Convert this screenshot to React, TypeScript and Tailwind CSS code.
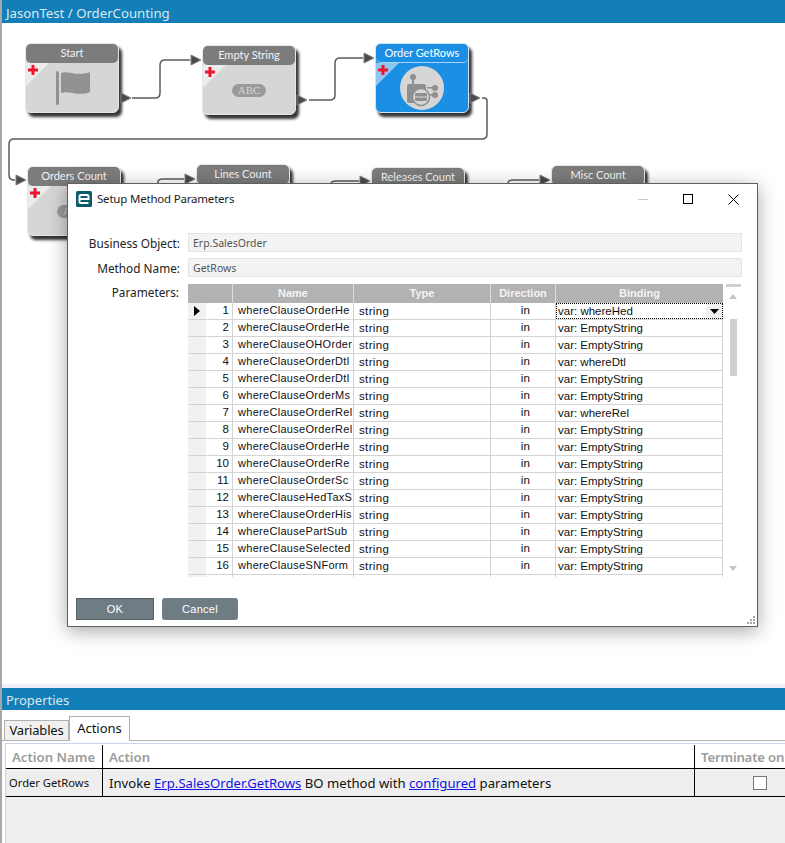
import React from "react";

const SEGOE = "font-['Noto_Sans',sans-serif]";
const ARIAL = "font-['Liberation_Sans',Arial,sans-serif]";

function Triangle({ x, y }: { x: number; y: number }) {
  return (
    <path
      d={`M${x} ${y - 5}L${x + 10} ${y}L${x} ${y + 5}Z`}
      fill="#4a4a4a"
      stroke="#808080"
      strokeWidth="1"
    />
  );
}

function Connectors() {
  const lines = [
    "M132 75H155Q160 75 160 70V42Q160 37 165 37H190",
    "M309 77H330Q335 77 335 72V40Q335 35 340 35H363",
    "M482 75H484Q487 75 487 78V111Q487 116 482 116H14Q9 116 9 121V152Q9 157 14 157H15",
    "M158 162V159Q158 156 163 156H184",
    "M331 162V161Q331 158 336 158H359",
    "M508 162V160Q508 157 513 157H539",
  ];
  return (
    <svg className="absolute left-0 top-0" width="785" height="200" fill="none">
      {lines.map((d) => (
        <path key={d} d={d} stroke="#5c5c5c" strokeWidth="1.5" />
      ))}
      <Triangle x={121} y={75} />
      <Triangle x={191} y={37} />
      <Triangle x={297} y={77} />
      <Triangle x={364} y={35} />
      <Triangle x={470} y={75} />
      <Triangle x={16} y={157} />
      <Triangle x={185} y={156} />
      <Triangle x={360} y={158} />
      <Triangle x={540} y={157} />
    </svg>
  );
}

function Plus() {
  return (
    <svg className="absolute left-[2px] top-[2px]" width="10" height="10" viewBox="0 0 10 10">
      <path d="M3.5 0H6.5V3.5H10V6.5H6.5V10H3.5V6.5H0V3.5H3.5Z" fill="#f0142d" />
    </svg>
  );
}

function FlagIcon() {
  return (
    <svg className="absolute left-[30px] top-[8px]" width="36" height="36" viewBox="0 0 36 36">
      <rect x="0" y="0" width="3" height="34" rx="1.5" fill="#929292" />
      <path d="M5 2C12 -1 20 6 34 1V21C22 26 13 19 5 22Z" fill="#929292" />
    </svg>
  );
}

function MethodIcon() {
  return (
    <svg className="absolute left-[24px] top-[3px]" width="44" height="44" viewBox="0 0 44 44">
      <circle cx="22" cy="22" r="22" fill="#d6d6d6" />
      <circle cx="13" cy="11" r="3" fill="#8f8f8f" />
      <rect x="12" y="13" width="2" height="6" fill="#8f8f8f" />
      <rect x="7" y="18" width="19" height="19" rx="2" fill="#8f8f8f" />
      <rect x="27" y="21" width="8" height="1.5" fill="#8f8f8f" />
      <rect x="27" y="28" width="8" height="1.5" fill="#8f8f8f" />
      <circle cx="35" cy="22" r="3" fill="#8f8f8f" />
      <circle cx="35" cy="29" r="3" fill="#8f8f8f" />
      <circle cx="21" cy="31" r="8.5" fill="#d6d6d6" stroke="#8f8f8f" strokeWidth="1.5" />
      <rect x="15" y="27" width="12" height="8" rx="1" fill="#8f8f8f" />
      <rect x="15" y="30.5" width="12" height="1" fill="#d6d6d6" />
    </svg>
  );
}

type NodeProps = {
  x: number;
  y: number;
  title: string;
  active?: boolean;
  icon?: "flag" | "abc" | "method";
};

function FlowNode({ x, y, title, active, icon }: NodeProps) {
  return (
    <div
      className={`absolute h-[70px] w-[94px] rounded-[6px] border shadow-[3px_4px_3px_rgba(0,0,0,0.8)] ${
        active ? "border-[#cfe3f2] bg-[#1a8fe4]" : "border-[#e6e6e6] bg-[#d6d6d6]"
      }`}
      style={{ left: x, top: y }}
    >
      <div
        className={`h-[19px] rounded-[5px] text-center font-['Lato',sans-serif] text-[11px] leading-[18px] ${
          active ? "border-b border-[#a9d3f2] bg-[#1a8fe4] text-white" : "bg-[#7c7c7c] text-[#f4f4f4]"
        }`}
      >
        {title}
      </div>
      <div className="relative">
        <svg className="absolute left-0 top-0" width="23" height="23">
          <path d="M0 0H23L0 23Z" fill={active ? "#8cc6f1" : "#ececec"} />
        </svg>
        {icon === "flag" && <FlagIcon />}
        {icon === "abc" && (
          <div className="absolute left-[29px] top-[19px] h-[13px] w-[34px] rounded-full bg-[#9a9a9a] text-center font-['Liberation_Serif',serif] text-[11px] leading-[13px] text-[#d6d6d6]">
            ABC
          </div>
        )}
        {icon === "method" && <MethodIcon />}
        <Plus />
      </div>
    </div>
  );
}

const names = [
  "whereClauseOrderHe",
  "whereClauseOrderHe",
  "whereClauseOHOrder",
  "whereClauseOrderDtl",
  "whereClauseOrderDtl",
  "whereClauseOrderMs",
  "whereClauseOrderRel",
  "whereClauseOrderRel",
  "whereClauseOrderHe",
  "whereClauseOrderRe",
  "whereClauseOrderSc",
  "whereClauseHedTaxS",
  "whereClauseOrderHis",
  "whereClausePartSub",
  "whereClauseSelected",
  "whereClauseSNForm",
];
const bindings: Record<number, string> = { 0: "whereHed", 3: "whereDtl", 6: "whereRel" };

function GridRow({ n, name, binding }: { n?: number; name?: string; binding?: string }) {
  const first = n === 1;
  return (
    <div className={`flex h-[17px] shrink-0 border-b-[1.5px] border-[#d4d4d4] text-[11px] leading-[15px] text-[#111] ${ARIAL}`}>
      <div className="flex w-[18px] shrink-0 items-center justify-center bg-[#f1f1f1]">
        {first && (
          <svg width="6" height="10" viewBox="0 0 6 10">
            <path d="M0 0L6 5L0 10Z" fill="#000" />
          </svg>
        )}
      </div>
      <div className="w-[27px] shrink-0 border-r-[1.5px] border-[#d4d4d4] pr-[3px] text-right text-[11.5px]">{n}</div>
      <div className="w-[121px] shrink-0 overflow-hidden whitespace-nowrap border-r-[1.5px] border-[#d4d4d4] pl-[5px] tracking-[0.3px]">
        {name}
      </div>
      <div className="w-[137px] shrink-0 border-r-[1.5px] border-[#d4d4d4] pl-[5px] pt-[1px] text-[11.5px] tracking-[0.35px]">{n ? "string" : ""}</div>
      <div className="w-[65px] shrink-0 border-r-[1.5px] border-[#d4d4d4] pl-[5px] text-center text-[11.5px] tracking-[0.35px]">{n ? "in" : ""}</div>
      {first ? (
        <div className="flex w-[167px] shrink-0 items-center justify-between border border-dotted border-black pl-px text-[11.5px]">
          <span className="pt-[1px]">var: {binding}</span>
          <div className="flex h-full w-[16px] items-center justify-center bg-[#f0f0f0]">
            <svg width="9" height="5" viewBox="0 0 9 5">
              <path d="M0 0H9L4.5 5Z" fill="#000" />
            </svg>
          </div>
        </div>
      ) : (
        <div className="w-[167px] shrink-0 border-r-[1.5px] border-[#d4d4d4] pl-[2px] pt-[1px] text-[11.5px]">{n ? `var: ${binding}` : ""}</div>
      )}
    </div>
  );
}

function Dialog() {
  return (
    <div className={`absolute left-[67px] top-[160px] h-[444px] w-[691px] border border-[#5f5f5f] bg-white shadow-[0_4px_18px_rgba(0,0,0,0.35)] ${SEGOE}`}>
      <div className="flex h-[30px] items-center pl-[8px] pr-[18px]">
        <svg width="16" height="16" viewBox="0 0 16 16">
          <rect width="16" height="16" rx="1.5" fill="#0c5b6d" />
          <path d="M3.5 8H12.5V5.5Q12.5 4 11 4H5Q3.5 4 3.5 5.5V10.5Q3.5 12 5 12H12.5" fill="none" stroke="#fff" strokeWidth="2" />
        </svg>
        <span className="ml-[5px] text-[11.5px] tracking-[-0.2px] text-[#222]">Setup Method Parameters</span>
        <div className="ml-auto flex items-center gap-[35px]">
          <div className="h-px w-[10px] bg-[#c8c8c8]" />
          <div className="h-[10px] w-[10px] border border-black" />
          <svg width="11" height="11" viewBox="0 0 11 11">
            <path d="M.5 .5L10.5 10.5M10.5 .5L.5 10.5" stroke="#000" strokeWidth="1" />
          </svg>
        </div>
      </div>
      <div className="mt-[19px] flex flex-col gap-[6px] pl-[120px] pr-[15px]">
        <div className="relative h-[19px] border border-[#e4e4e4] bg-[#f3f3f3] pl-[4px] text-[10.5px] leading-[18px] text-[#555]">
          <span className="absolute right-full mr-[9px] whitespace-nowrap text-[11.8px] text-[#222]">Business Object:</span>
          Erp.SalesOrder
        </div>
        <div className="relative h-[19px] border border-[#e4e4e4] bg-[#f3f3f3] pl-[4px] text-[10.5px] leading-[18px] text-[#555]">
          <span className="absolute right-full mr-[9px] whitespace-nowrap text-[11.8px] text-[#222]">Method Name:</span>
          GetRows
        </div>
        <div className="relative mt-[1px] flex h-[293px]">
          <span className="absolute right-full mr-[9px] whitespace-nowrap text-[11.8px] leading-[17px] text-[#222]">Parameters:</span>
          <div className="flex h-[293px] w-[535px] flex-col overflow-hidden">
            <div className={`flex h-[19px] shrink-0 bg-[#b2b2b2] text-center text-[11px] font-bold leading-[19px] text-[#f4f4f4] ${ARIAL}`}>
              <div className="w-[45px] shrink-0 border-r border-[#dcdcdc]" />
              <div className="w-[121px] shrink-0 border-r border-[#dcdcdc]">Name</div>
              <div className="w-[137px] shrink-0 border-r border-[#dcdcdc]">Type</div>
              <div className="w-[65px] shrink-0 border-r border-[#dcdcdc]">Direction</div>
              <div className="w-[167px] shrink-0">Binding</div>
            </div>
            {names.map((name, i) => (
              <GridRow key={i} n={i + 1} name={name} binding={bindings[i] ?? "EmptyString"} />
            ))}
            <GridRow />
          </div>
          <div className="ml-[2px] flex w-[16px] flex-col items-center">
            <div className="h-[3px] w-[15px] bg-[#d0d0d0]" />
            <svg className="mt-[7px]" width="8" height="5" viewBox="0 0 8 5">
              <path d="M4 0L8 5H0Z" fill="#c4c4c4" />
            </svg>
            <div className="mt-[20px] h-[57px] w-[7px] bg-[#d0d0d0]" />
            <svg className="mt-[190px]" width="8" height="5" viewBox="0 0 8 5">
              <path d="M0 0H8L4 5Z" fill="#c4c4c4" />
            </svg>
          </div>
        </div>
      </div>
      <div className={`mt-[21px] flex gap-[8px] pl-[8px] text-[11px] leading-[20px] text-white ${ARIAL}`}>
        <button className="h-[22px] w-[78px] border border-[#555f66] bg-[#6f7c84] tracking-[0.3px]">OK</button>
        <button className="h-[22px] w-[76px] rounded-[3px] bg-[#6f7c84] tracking-[0.3px]">Cancel</button>
      </div>
      <svg className="absolute bottom-[1px] right-[1px]" width="10" height="10" viewBox="0 0 10 10" fill="#a8a8a8">
        <rect x="7" y="1" width="2" height="2" />
        <rect x="4" y="4" width="2" height="2" />
        <rect x="7" y="4" width="2" height="2" />
        <rect x="1" y="7" width="2" height="2" />
        <rect x="4" y="7" width="2" height="2" />
        <rect x="7" y="7" width="2" height="2" />
      </svg>
    </div>
  );
}

function Properties() {
  return (
    <div className={`flex h-[155px] shrink-0 flex-col bg-white ${SEGOE}`}>
      <div className="h-[22px] shrink-0 bg-[#127fb8] pl-[4px] text-[13px] leading-[24px] text-[#dbe9f2]">Properties</div>
      <div className="flex h-[31px] shrink-0 items-end border-b border-[#b0b0b0] pl-[2px]">
        <div className="h-[20px] w-[65px] border border-b-0 border-[#b0b0b0] bg-[#f0f0f0] text-center text-[13px] leading-[19px] tracking-[-0.2px] text-[#111]">Variables</div>
        <div className="-mb-px h-[25px] w-[61px] border border-b-0 border-[#b0b0b0] bg-white text-center text-[13px] leading-[22px] text-[#111]">Actions</div>
      </div>
      <div className="ml-[3px] mt-[2px] flex-1 border-l border-t border-[#c9d3ea] pt-[1px]">
        <div className="flex h-[24px] border-b border-black bg-white text-[13.2px] font-semibold leading-[24px] text-[#9c9c9c]">
          <div className="w-[97px] shrink-0 border-r border-black pl-[6px]">Action Name</div>
          <div className="w-[592px] shrink-0 border-r border-black pl-[6px]">Action</div>
          <div className="whitespace-nowrap pl-[6px] tracking-[-0.2px]">Terminate on</div>
        </div>
        <div className="flex h-[28px] border-b border-black bg-[#eeeeee] text-[#111]">
          <div className="w-[97px] shrink-0 whitespace-nowrap border-r border-black pl-[3px] text-[11.2px] leading-[27px]">Order GetRows</div>
          <div className="w-[592px] shrink-0 whitespace-nowrap border-r border-black pl-[6px] text-[13.15px] leading-[28px]">
            Invoke <span className="text-[#1414e6] underline">Erp.SalesOrder.GetRows</span> BO method with{" "}
            <span className="text-[#1414e6] underline">configured</span> parameters
          </div>
          <div className="flex flex-1 items-center pl-[58px]">
            <div className="h-[14px] w-[14px] border border-[#777] bg-white" />
          </div>
        </div>
        <div className="h-[47px] bg-[#eeeeee]" />
      </div>
    </div>
  );
}

export default function App() {
  return (
    <div className="flex h-[843px] w-[785px] flex-col overflow-hidden border-l-2 border-[#a8a8a8] bg-white">
      <div className={`h-[23px] shrink-0 bg-[#127fb8] pl-[4px] text-[13.2px] leading-[26px] text-[#dbe9f2] ${SEGOE}`}>
        JasonTest / OrderCounting
      </div>
      <div className="relative h-[661px] shrink-0 -ml-[2px]">
        <FlowNode x={25} y={20} title="Start" icon="flag" />
        <FlowNode x={202} y={22} title="Empty String" icon="abc" />
        <FlowNode x={375} y={20} title="Order GetRows" icon="method" active />
        <FlowNode x={27} y={143} title="Orders Count" icon="abc" />
        <FlowNode x={196} y={141} title="Lines Count" />
        <FlowNode x={371} y={144} title="Releases Count" />
        <FlowNode x={551} y={142} title="Misc Count" />
        <Connectors />
        <Dialog />
      </div>
      <div className="h-[4px] shrink-0 bg-[#eef2f8]" />
      <Properties />
    </div>
  );
}
